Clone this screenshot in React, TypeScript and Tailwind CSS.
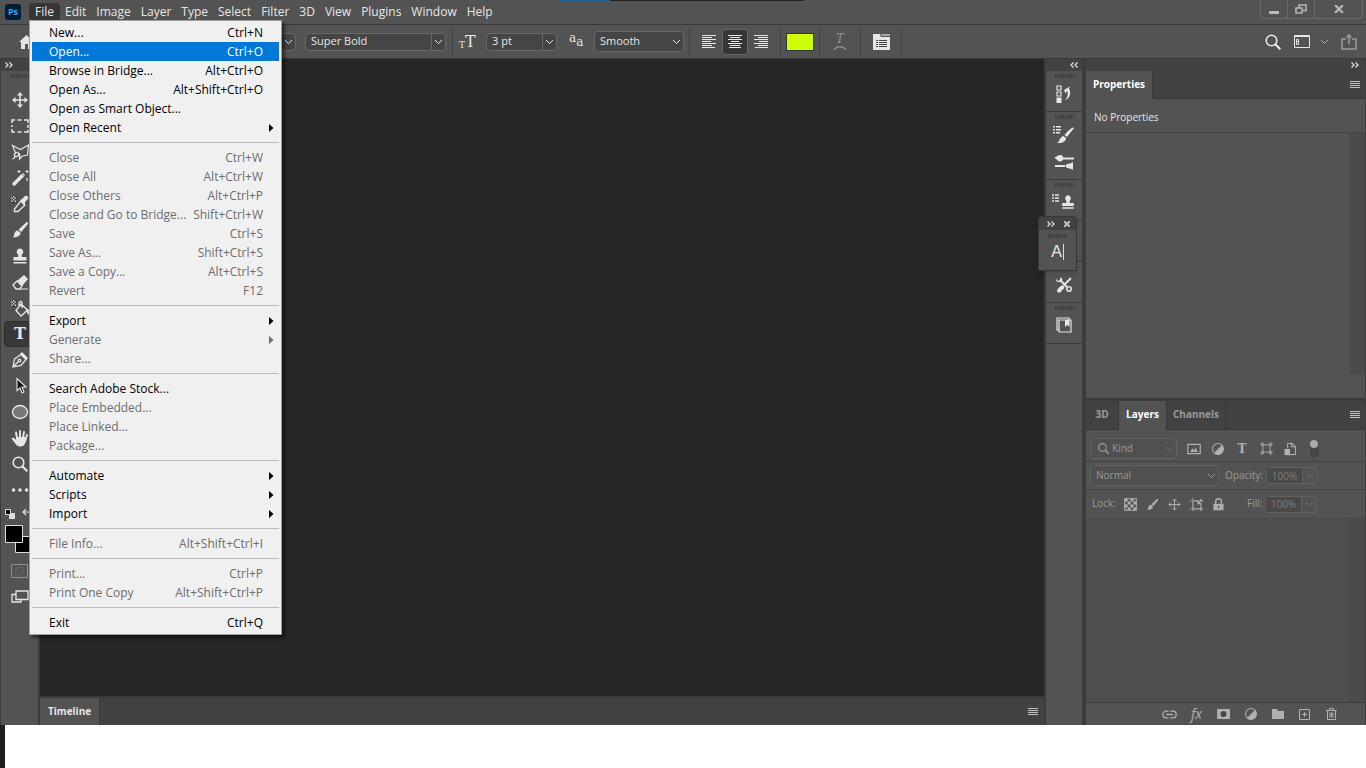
import { ReactNode } from "react";

interface MenuEntry {
    label: string;
    shortcut?: string;
    submenu?: boolean;
    disabled?: boolean;
    active?: boolean;
}

const menus = ["Edit", "Image", "Layer", "Type", "Select", "Filter", "3D", "View", "Plugins", "Window", "Help"];

const fileMenu: MenuEntry[][] = [
    [
        { label: "New...", shortcut: "Ctrl+N" },
        { label: "Open...", shortcut: "Ctrl+O", active: true },
        { label: "Browse in Bridge...", shortcut: "Alt+Ctrl+O" },
        { label: "Open As...", shortcut: "Alt+Shift+Ctrl+O" },
        { label: "Open as Smart Object..." },
        { label: "Open Recent", submenu: true },
    ],
    [
        { label: "Close", shortcut: "Ctrl+W", disabled: true },
        { label: "Close All", shortcut: "Alt+Ctrl+W", disabled: true },
        { label: "Close Others", shortcut: "Alt+Ctrl+P", disabled: true },
        { label: "Close and Go to Bridge...", shortcut: "Shift+Ctrl+W", disabled: true },
        { label: "Save", shortcut: "Ctrl+S", disabled: true },
        { label: "Save As...", shortcut: "Shift+Ctrl+S", disabled: true },
        { label: "Save a Copy...", shortcut: "Alt+Ctrl+S", disabled: true },
        { label: "Revert", shortcut: "F12", disabled: true },
    ],
    [
        { label: "Export", submenu: true },
        { label: "Generate", submenu: true, disabled: true },
        { label: "Share...", disabled: true },
    ],
    [
        { label: "Search Adobe Stock..." },
        { label: "Place Embedded...", disabled: true },
        { label: "Place Linked...", disabled: true },
        { label: "Package...", disabled: true },
    ],
    [
        { label: "Automate", submenu: true },
        { label: "Scripts", submenu: true },
        { label: "Import", submenu: true },
    ],
    [{ label: "File Info...", shortcut: "Alt+Shift+Ctrl+I", disabled: true }],
    [
        { label: "Print...", shortcut: "Ctrl+P", disabled: true },
        { label: "Print One Copy", shortcut: "Alt+Shift+Ctrl+P", disabled: true },
    ],
    [{ label: "Exit", shortcut: "Ctrl+Q" }],
];

// 18x18 icon drawn with strokes, children can override with their own fill
function Icon({ children, size = 18 }: { children: ReactNode; size?: number }) {
    return (
        <svg width={size} height={size} viewBox="0 0 18 18" fill="none" stroke="currentColor" strokeWidth="1.3" className="shrink-0">
            {children}
        </svg>
    );
}

const Move = () => (
    <Icon>
        <path d="M9 3v12M3 9h12" strokeWidth="1.5" />
        <path d="M9 1l3 3.5H6zM9 17l3-3.5H6zM1 9l3.5-3v6zM17 9l-3.500-3v6z" fill="currentColor" stroke="none" />
    </Icon>
);

const Brush = ({ size }: { size?: number }) => (
    <Icon size={size}>
        <path d="M16.600 1.200c.8.500.5 1.300-.1 2.200L10.200 11 7.500 8.700l7.300-7c.700-.6 1.200-.9 1.800-.5zM6.800 9.500l2.700 2.300c.2 2.500-2.500 5-8 4.400 1.800-1 1.500-2.400 2-4 .5-1.500 1.700-2.600 3.300-2.700z" fill="currentColor" stroke="none" />
    </Icon>
);

const Stamp = ({ size }: { size?: number }) => (
    <Icon size={size}>
        <path d="M9 1.500a3.300 3.300 0 0 1 2.300 5.600c-.6.800-.7 1.700-.4 2.900h4.600v3.500h-13V10h4.600c.3-1.200.2-2.100-.4-2.900A3.300 3.300 0 0 1 9 1.500zM2.500 15h13v1.500h-13z" fill="currentColor" stroke="none" />
    </Icon>
);

const Checker = () => (
    <g transform="translate(-1 0)">
        <path d="M.5 1h6l-.5 5.500-3 1.500-2.500-1.500z" fill="#1c1c1c" stroke="none" />
        <path d="M0 1h1.500v1.500H0zM3 1h1.500v1.500H3zM1.500 2.500H3V4H1.500zM4.500 2.500H6V4H4.500zM0 4h1.500v1.500H0zM3 4h1.500v1.500H3zM1.500 5.500H3V7H1.500zM4.500 5.500H6V7H4.500z" fill="currentColor" stroke="none" />
    </g>
);

const Magnifier = ({ size }: { size?: number }) => (
    <Icon size={size}>
        <circle cx="7.500" cy="7.500" r="5.300" strokeWidth="1.600" />
        <path d="M11.300 11.300l5 5" strokeWidth="2.200" />
    </Icon>
);

const Adjust = ({ size }: { size?: number }) => (
    <Icon size={size}>
        <circle cx="9" cy="9" r="7" />
        <path d="M4 14A7 7 0 0 0 14 4z" fill="currentColor" stroke="none" />
    </Icon>
);

const SlabT = ({ className }: { className: string }) => (
    <span className={`font-['DejaVu_Serif','Liberation_Serif',serif] leading-none ${className}`}>T</span>
);

const tools: { name: string; icon: ReactNode; selected?: boolean }[] = [
    { name: "Move", icon: <Move /> },
    { name: "Marquee", icon: <Icon><path d="M1 6V3h3M6.500 3h4M13 3h4v3M17 8v3M17 13v2h-4M10.500 15h-4M4 15H1v-3M1 10V8" strokeWidth="1.500" /></Icon> },
    {
        name: "Lasso",
        icon: <Icon><path d="M5 11L1.500 2.500l8 4 8-4.500-1 10-7 1.500M5.500 9.500c-2 0-3 2-1.500 3.500s4 0 3.500-2-1-2-2-1.500zM4 12.500c0 2-.5 3-2.500 3.500M8.500 10v6l2-2" strokeWidth="1.200" /></Icon>,
    },
    {
        name: "Magic Wand",
        icon: (
            <Icon>
                <path d="M10.500 5l2.500 2.500L4 16.500c-1.500 1-3.500-1-2.500-2.500z" fill="currentColor" stroke="none" />
                <path d="M11.500 4.500l2 2M8 1v3M6.500 2.500h3M16 1v3M14.500 2.500h3M16 9v3" strokeWidth="1.200" />
            </Icon>
        ),
    },
    {
        name: "Eyedropper",
        icon: (
            <Icon>
                <Checker />
                <path d="M10 6l4 4-7 6.500H3.500V14z" />
                <path d="M9 5l2-1 3-3c2-1 4 1 3 3l-3 3v2l-1.500 1z" fill="currentColor" stroke="none" />
            </Icon>
        ),
    },
    { name: "Brush Tool", icon: <Brush /> },
    { name: "Clone Stamp", icon: <Stamp /> },
    {
        name: "Eraser",
        icon: (
            <Icon>
                <path d="M2 12l4-4 5 5-2.500 3H5z" />
                <path d="M6.500 7.500L13 2l4 4-6 7zM8 15.500h9v1H8z" fill="currentColor" stroke="none" />
            </Icon>
        ),
    },
    {
        name: "Paint Bucket",
        icon: (
            <Icon>
                <Checker />
                <path d="M10 5l6.500 6-6.500 6-5-5.500zM8 8V4c0-2 3-2 3 0v5" />
                <path d="M15 9l3 2v5c-2-1-2-3-3-7z" fill="currentColor" stroke="none" />
            </Icon>
        ),
    },
    { name: "Type Tool", icon: <SlabT className="text-base font-bold" />, selected: true },
    {
        name: "Pen",
        icon: (
            <Icon>
                <path d="M2 16l1.500-8L10 3.500l5 5L10 14.500zM2 16l6-6" />
                <path d="M11 1l6 6-2 2-6-6z" fill="currentColor" stroke="none" />
                <circle cx="8.500" cy="9.500" r="1.300" />
            </Icon>
        ),
    },
    { name: "Path Selection", icon: <Icon><path d="M6 1.500v12l3-2.500 2 5 2-1-2-5h4z" fill="#111111" strokeWidth="1.100" /></Icon> },
    { name: "Ellipse", icon: <Icon><ellipse cx="9" cy="9" rx="7.500" ry="6.500" fill="#777777" /></Icon> },
    {
        name: "Hand",
        icon: <Icon><path d="M6 9L5 3.500M9 8V2M12 9l1-6M14 12l2-6" strokeWidth="1.900" strokeLinecap="round" /><path d="M5 8h9l1.500 2c-1 4-2 7.500-6 7.500-3 0-4-1-9-8 1-1.500 3-.5 4.500 1.500z" fill="currentColor" stroke="none" /></Icon>,
    },
    { name: "Zoom", icon: <Magnifier /> },
    { name: "More tools", icon: <Icon><path d="M2.500 9h.1M9 9h.1M15.500 9h.1" strokeWidth="3.500" strokeLinecap="round" /></Icon> },
];

function Chevron({ className = "" }: { className?: string }) {
    return (
        <svg width="9" height="6" viewBox="0 0 9 6" fill="none" stroke="currentColor" className={`pointer-events-none shrink-0 ${className}`}>
            <path d="M1 1l3.500 3.500L8 1" />
        </svg>
    );
}

function DoubleArrow({ left = false }: { left?: boolean }) {
    return (
        <svg width="8" height="6" viewBox="0 0 8 6" fill="none" stroke="currentColor" strokeWidth="1.300" className="text-[#dddddd]">
            <path d={left ? "M3.500.5L1 3l2.500 2.500M7.500.5L5 3l2.500 2.500" : "M.5.5L3 3 .5 5.500M4.500.5L7 3 4.500 5.500"} />
        </svg>
    );
}

function Grip() {
    return (
        <svg width="19" height="4" viewBox="0 0 19 4" stroke="#3c3c3c" className="shrink-0">
            <path d="M.5 0v4M2.500 0v4M4.500 0v4M6.500 0v4M8.500 0v4M10.500 0v4M12.500 0v4M14.500 0v4M16.500 0v4M18.500 0v4" />
        </svg>
    );
}

function Lines() {
    return (
        <button aria-label="Panel menu" className="text-[#c0c0c0]">
            <svg width="10" height="8" viewBox="0 0 10 8" stroke="currentColor">
                <path d="M0 .5h10M0 2.500h10M0 4.500h10M0 6.500h10" />
            </svg>
        </button>
    );
}

function Separator() {
    return <div className="h-7 w-px shrink-0 bg-[#424242]" />;
}

function Combo({ label, value, className, split = true }: { label: string; value: string; className: string; split?: boolean }) {
    return (
        <div className={`relative flex shrink-0 items-center rounded-sm border ${className}`}>
            <select aria-label={label} className="h-full w-full appearance-none bg-transparent pr-5 pl-[5px] outline-none">
                <option>{value}</option>
            </select>
            <div className={`pointer-events-none absolute inset-y-0 right-0 flex w-3.5 items-center justify-center ${split ? "border-l border-inherit" : ""}`}>
                <Chevron />
            </div>
        </div>
    );
}

function AlignIcon({ d }: { d: string }) {
    return (
        <svg width="14" height="13" viewBox="0 0 14 13" stroke="currentColor" strokeWidth="1">
            <path d={d} />
        </svg>
    );
}

function FileMenu() {
    return (
        <div role="menu" className="absolute top-5 left-[29px] z-20 w-[253px] border border-[#a0a0a0] bg-[#f0f0f0] p-0.5 text-black shadow-[3px_3px_3px_rgba(0,0,0,0.5)]">
            {fileMenu.map((group, i) => (
                <div key={i}>
                    {i > 0 && <hr className="my-[5px] border-[#bcbcbc]" />}
                    {group.map((item) => (
                        <button
                            key={item.label}
                            role="menuitem"
                            disabled={item.disabled}
                            className={`flex h-[19px] w-full items-center justify-between pr-[5px] pl-[17px] ${item.active ? "bg-[#0078d7] text-white" : item.disabled ? "text-[#6d6d6d]" : ""}`}
                        >
                            <span>{item.label}</span>
                            {item.shortcut && <span className="pr-[11px]">{item.shortcut}</span>}
                            {item.submenu && (
                                <svg width="5" height="8" viewBox="0 0 5 8" fill="currentColor">
                                    <path d="M0 0l4.500 4L0 8z" />
                                </svg>
                            )}
                        </button>
                    ))}
                </div>
            ))}
        </div>
    );
}

function MenuBar() {
    return (
        <header className="flex h-[25px] shrink-0 items-start justify-between border-b border-[#383838] pl-[5px]">
            <nav className="flex h-6 items-center">
                <div className="mr-2 flex size-4 items-center justify-center rounded-[3px] bg-[#001e36] text-[9px] font-bold text-[#31a8ff]">Ps</div>
                <button aria-haspopup="menu" className="h-[18px] rounded-sm bg-[#363636] px-1.5">File</button>
                <FileMenu />
                {menus.map((name) => (
                    <button key={name} className="px-[5px]">{name}</button>
                ))}
            </nav>
            <div className="mr-[3px] flex h-[19px] divide-x divide-[#6a6a6a] rounded-b-sm border border-t-0 border-[#6a6a6a] text-[#b8b8b8]">
                <button aria-label="Minimize" className="flex w-[27px] justify-center pt-[11px]">
                    <svg width="10" height="3" fill="currentColor"><rect width="10" height="3" /></svg>
                </button>
                <button aria-label="Restore" className="flex w-[27px] items-center justify-center">
                    <svg width="12" height="10" viewBox="0 0 12 10" fill="none" stroke="currentColor" strokeWidth="1.600">
                        <path d="M4 3.500V1h7v5.500H8M1 4h6v5H1z" />
                    </svg>
                </button>
                <button aria-label="Close window" className="flex w-[47px] items-center justify-center">
                    <svg width="10" height="8" viewBox="0 0 10 8" stroke="currentColor" strokeWidth="2.200"><path d="M1 0l8 8M9 0L1 8" /></svg>
                </button>
            </div>
        </header>
    );
}

function OptionsBar() {
    const box = "border-[#676767] bg-[#454545]";
    return (
        <div className="flex h-[34px] shrink-0 items-center border-b border-[#383838] pr-[9px] text-[11px]">
            <div className="flex w-[296px] shrink-0 items-center justify-between pl-[19px]">
                <button aria-label="Home">
                    <svg width="15" height="14" viewBox="0 0 15 14" fill="currentColor"><path d="M7.500 0L0 7h2v7h4V9h3v5h4V7h2z" /></svg>
                </button>
                <Combo label="Font family" value="" className={`h-[18px] w-44 ${box}`} />
            </div>
            <Combo label="Font style" value="Super Bold" className={`ml-[9px] h-[18px] w-[141px] ${box}`} />
            <div className="ml-1.5 flex items-center gap-1.5">
                <Separator />
                <div className="flex w-[19px] items-end"><SlabT className="text-[9px]" /><SlabT className="text-base" /></div>
            </div>
            <Combo label="Font size" value="3 pt" className={`ml-2 h-[18px] w-[71px] ${box}`} />
            <span className="ml-3 w-[25px] font-['DejaVu_Serif',serif] text-xs leading-none"><span className="relative -top-1">a</span>a</span>
            <Combo label="Anti-aliasing" value="Smooth" split={false} className={`h-[21px] w-[90px] ${box}`} />
            <div className="ml-[5px] flex items-center">
                <Separator />
                <div className="mx-1.5 flex items-center">
                    <button aria-label="Align left" className="flex h-[26px] w-[26px] items-center justify-center">
                        <AlignIcon d="M0 .5h14M0 2.500h10M0 4.500h14M0 6.500h9M0 8.500h14M0 10.500h10M0 12.500h13" />
                    </button>
                    <button aria-label="Align center" className="flex h-[26px] w-[26px] items-center justify-center rounded-sm border border-[#676767] bg-[#363636]">
                        <AlignIcon d="M0 .5h14M2 2.500h10M0 4.500h14M3 6.500h8M0 8.500h14M2 10.500h10M1 12.500h12" />
                    </button>
                    <button aria-label="Align right" className="flex h-[26px] w-[26px] items-center justify-center">
                        <AlignIcon d="M0 .5h14M4 2.500h10M0 4.500h14M5 6.500h9M0 8.500h14M4 10.500h10M1 12.500h13" />
                    </button>
                </div>
                <Separator />
                <button aria-label="Text color" className="mx-[5px] h-[18px] w-7 border border-[#363636] bg-[#ccff00]" />
                <Separator />
                <button aria-label="Warp text" className="flex w-10 flex-col items-center text-[#909090]">
                    <SlabT className="text-xs italic" />
                    <svg width="14" height="5" viewBox="0 0 14 5" fill="none" stroke="currentColor" strokeWidth="1.400"><path d="M1 4.500c4-4 8-4 12 0" /></svg>
                </button>
                <Separator />
                <button aria-label="Character panel" className="flex w-10 justify-center">
                    <svg width="17" height="16" viewBox="0 0 17 16" fill="currentColor">
                        <path d="M0 0h7l1 3h9v13H0z" /><path d="M8 0h9v2H9z" opacity=".6" />
                        <path d="M3 6.500h2M6 6.500h8M3 8.500h2M6 8.500h8M3 10.500h2M6 10.500h8M3 12.500h2M6 12.500h8" stroke="#444444" />
                    </svg>
                </button>
                <Separator />
            </div>
            <div className="ml-auto flex items-center">
                <button aria-label="Search" className="mr-3"><Magnifier /></button>
                <button aria-label="Workspace" className="mr-2.5">
                    <svg width="16" height="13" viewBox="0 0 16 13" fill="none" stroke="currentColor"><path d="M.5.5h15v12H.5zM0 1.500h16" /><path d="M2.500 4.500h2v2h-2zM2.500 6.500h2v3h-2z" /></svg>
                </button>
                <Chevron className="mr-3 text-[#b0b0b0]" />
                <button aria-label="Share" className="text-[#9a9a9a]">
                    <svg width="16" height="16" viewBox="0 0 16 16" fill="none" stroke="currentColor" strokeWidth="1.600"><path d="M5 5H1v10h14V5h-4M8 10V1M5.500 3.500L8 1l2.500 2.500" /></svg>
                </button>
            </div>
        </div>
    );
}

function Toolbar() {
    return (
        <aside className="flex w-10 shrink-0 flex-col border-r-2 border-l border-[#3c3c3c]">
            <div className="flex h-3 shrink-0 items-center bg-[#424242] pl-1"><DoubleArrow /></div>
            <div className="flex h-4 shrink-0 items-start pt-[3px] pl-[9px]"><Grip /></div>
            <div className="flex flex-col pl-[3px]">
                {tools.map((tool) => (
                    <button key={tool.name} aria-label={tool.name} className={`flex h-[26px] w-8 items-center justify-center rounded-sm ${tool.selected ? "border border-[#2e2e2e] bg-[#383838]" : ""}`}>
                        {tool.icon}
                    </button>
                ))}
            </div>
            <div className="mt-1.5 flex gap-1.5 pl-1">
                <button aria-label="Default colors">
                    <svg width="11" height="11" viewBox="0 0 11 11"><path d="M4 4h6v6H4z" fill="#dddddd" /><path d="M.5.5h5v5h-5z" fill="#000000" stroke="#dddddd" /></svg>
                </button>
                <button aria-label="Swap colors">
                    <svg width="11" height="11" viewBox="0 0 11 11" fill="none" stroke="currentColor" strokeWidth="1.200"><path d="M4 0L1 3l3 3M1 3h5c2 0 3 1 3 3v3" /></svg>
                </button>
            </div>
            <svg width="30" height="28" viewBox="0 0 30 28" className="mt-[5px] ml-1 shrink-0" stroke="#dddddd" fill="#000000">
                <path d="M10.500 11.500h18v16h-18z" /><path d="M.5.500h17v17H.5z" />
            </svg>
            <button aria-label="Quick mask" className="mt-[11px] ml-2.5 text-[#909090]">
                <svg width="17" height="14" viewBox="0 0 17 14" fill="none" stroke="currentColor"><path d="M.5.5h16v13H.5z" /><circle cx="8.500" cy="7" r="4" strokeDasharray="1 1.500" /></svg>
            </button>
            <button aria-label="Screen mode" className="mt-3 ml-2.5">
                <svg width="18" height="14" viewBox="0 0 18 14" fill="#535353" stroke="currentColor" strokeWidth="1.300"><path d="M1 4.500h9v7.500H1z" /><path d="M5 1h12v8.500H5z" /></svg>
            </button>
        </aside>
    );
}

function DockCell({ label, children }: { label: string; children: ReactNode }) {
    return (
        <button aria-label={label} className="flex min-h-[41px] w-full flex-col items-center gap-[7px] border-b border-[#3a3a3a] pt-[3px] pb-1.5">
            <Grip />
            {children}
        </button>
    );
}

function Dock() {
    return (
        <aside className="relative flex w-10 shrink-0 flex-col border-x-2 border-[#3c3c3c]">
            <div className="flex h-3 shrink-0 items-center justify-end bg-[#424242] pr-1"><DoubleArrow left /></div>
            <DockCell label="History">
                <svg width="16" height="18" viewBox="0 0 16 18" fill="none" stroke="currentColor" strokeWidth="1.200">
                    <path d="M1 1h4v4H1zM1 7h4v4H1z" /><path d="M.5 12.500h5V18h-5z" fill="currentColor" stroke="none" />
                    <path d="M8 5l6-3.500-1 2.200c2.500 5 1 9.500-4 11.300 3-3 3.500-6 2-9.500l-1.500 3z" fill="currentColor" stroke="none" />
                </svg>
            </DockCell>
            <DockCell label="Brushes">
                <svg width="22" height="18" viewBox="0 0 22 18" fill="currentColor">
                    <path d="M0 0h2v1.500H0zM3 0h5v1.500H3zM0 3h2v1.500H0zM3 3h5v1.500H3zM0 6h2v1.500H0zM3 6h4v1.500H3zM21 2l-7 9-2.500-2C15 5 20 0 21 2zM10.500 10l2.500 2c0 3-3 5.500-9 5 3-1 2-6 6.500-7z" />
                </svg>
                <svg width="20" height="18" viewBox="0 0 20 18" fill="currentColor" className="mt-0.5 mb-0.5">
                    <path d="M9 4.500h11v2H9zM0 4.500C3 4 4 1.500 7 2c3 .500 3 6 0 6.500C4 9 3 6 0 4.500zM1 12h10v2H1zM19 9v8c-1-1-4-2-6-2-2-1-2-3 0-4 2 0 4-1 6-2z" />
                </svg>
            </DockCell>
            <DockCell label="Clone source">
                <div className="flex items-start">
                    <svg width="8" height="8" viewBox="0 0 8 8" stroke="currentColor" strokeWidth="1.300"><path d="M0 1h2M3 1h4M0 4h2M3 4h4M0 7h2M3 7h4" /></svg>
                    <Stamp size={16} />
                </div>
            </DockCell>
            <DockCell label="Character"><span /></DockCell>
            <DockCell label="Tool presets">
                <Icon>
                    <path d="M16 2L8.500 9.500M6 5l6 6" strokeWidth="1.800" />
                    <path d="M1 3l2 2 2-1V1.500C8 2 8 5 6 6L3 6C1 5.500 1 4 1 3zM7.500 9l2 2c0 2-2 2-3 4-1 2-4 2-4.500 0C2 13 4 12 4.500 11z" fill="currentColor" stroke="none" />
                    <circle cx="14" cy="13" r="2.200" strokeWidth="1.600" />
                </Icon>
            </DockCell>
            <DockCell label="Libraries">
                <svg width="17" height="17" viewBox="0 0 17 17" fill="none" stroke="currentColor" strokeWidth="1.200"><path d="M3 3h12v12H3zM3 13H1V1h12v2" /><path d="M9 3v7l2.500-2 2 2V3z" fill="currentColor" stroke="none" /></svg>
            </DockCell>
            <div className="absolute top-[157px] -left-2 w-[39px] overflow-hidden rounded-t-sm border border-[#373737] bg-[#535353] shadow-md">
                <div className="flex h-[13px] items-center justify-between bg-[#424242] pr-1.5 pl-2">
                    <DoubleArrow />
                    <button aria-label="Close panel" className="text-[#c0c0c0]">
                        <svg width="6" height="6" viewBox="0 0 6 6" stroke="currentColor" strokeWidth="2"><path d="M0 0l6 6M6 0L0 6" /></svg>
                    </button>
                </div>
                <div className="flex h-10 flex-col items-center pt-1">
                    <Grip />
                    <span className="mt-1 flex items-center font-['Liberation_Sans',sans-serif] text-base leading-5">A<span className="ml-px h-4 w-px bg-[#dddddd]" /></span>
                </div>
            </div>
        </aside>
    );
}

function PropertiesPanel() {
    return (
        <section className="flex h-[329px] shrink-0 flex-col border-b-2 border-[#3c3c3c]">
            <div className="flex h-7 shrink-0 items-center justify-between border-b border-[#383838] bg-[#424242] pr-[5px]">
                <button className="h-7 border-r border-[#383838] bg-[#535353] px-[7px] font-bold text-white">Properties</button>
                <Lines />
            </div>
            <p className="flex h-[34px] shrink-0 items-center border-b border-[#434343] px-2 pt-1">No Properties</p>
            <div className="flex flex-1 justify-end pb-6"><div className="w-4 bg-[#4b4b4b]" /></div>
        </section>
    );
}

function LayersPanel() {
    const field = "border-[#626262] bg-[#505050] text-[#9a9a9a]";
    const filterButton = "flex w-6 items-center justify-center";
    const footerButton = "flex w-[27px] items-center justify-center";
    return (
        <section className="flex min-h-0 flex-1 flex-col border-t border-[#3c3c3c] text-[#9a9a9a]">
            <div className="flex h-[29px] shrink-0 items-center justify-between border-b border-[#383838] bg-[#424242] pr-[5px] font-bold">
                <div className="flex h-[29px]">
                    <button className="w-[33px] border-r border-[#383838]">3D</button>
                    <button className="w-12 border-r border-[#383838] bg-[#535353] text-white">Layers</button>
                    <button className="w-[59px] border-r border-[#383838]">Channels</button>
                </div>
                <Lines />
            </div>
            <div className="flex h-8 shrink-0 items-center border-b border-[#434343] pt-1.5 pl-1">
                <div className={`flex h-[21px] w-[87px] items-center rounded-sm border pl-1.5 ${field}`}>
                    <Magnifier size={13} />
                    <select aria-label="Filter type" className="min-w-0 flex-1 appearance-none bg-transparent pl-0.5"><option>Kind</option></select>
                    <Chevron className="mr-0.5 text-[#707070]" />
                </div>
                <div className="ml-[5px] flex items-center text-[#b0b0b0]">
                    <button aria-label="Pixel layers" className={filterButton}>
                        <Icon size={14}><path d="M1 3h16v12H1z" strokeWidth="1.500" /><path d="M4 13l3-5 2 3 2-4 3 6z" fill="currentColor" stroke="none" /></Icon>
                    </button>
                    <button aria-label="Adjustment layers" className={filterButton}><Adjust size={14} /></button>
                    <button aria-label="Type layers" className={filterButton}><SlabT className="text-xs font-bold" /></button>
                    <button aria-label="Shape layers" className={filterButton}>
                        <Icon size={13}><path d="M4 4h10v10H4zM1.500 1.500h3v3h-3zM13.500 1.500h3v3h-3zM1.500 13.500h3v3h-3zM13.500 13.500h3v3h-3z" /></Icon>
                    </button>
                    <button aria-label="Smart objects" className={filterButton}>
                        <Icon size={14}><path d="M6 8V2h6l4 4v10H9M11 2v4h5" /><path d="M2 9h7v8H2z" fill="currentColor" stroke="none" /></Icon>
                    </button>
                    <button aria-label="Toggle filter" className={filterButton}>
                        <span className="flex h-[18px] w-[9px] justify-center rounded-full bg-[#464646]"><span className="size-2 rounded-full bg-[#aaaaaa]" /></span>
                    </button>
                </div>
            </div>
            <div className="flex h-7 shrink-0 items-center border-b border-[#434343] pl-1">
                <Combo label="Blend mode" value="Normal" split={false} className={`h-[21px] w-[129px] ${field}`} />
                <label htmlFor="opacity" className="w-[47px] pl-1.5">Opacity:</label>
                <Percent id="opacity" />
            </div>
            <div className="flex h-[29px] shrink-0 items-center border-b border-[#484848] pl-1.5">
                <span className="w-8">Lock:</span>
                <div className="flex gap-[9px] text-[#b0b0b0]">
                    <button aria-label="Lock transparency">
                        <Icon size={13}><path d="M1 1h16v16H1z" strokeWidth="1.500" /><path d="M1 1h4v4H1zM9 1h4v4H9zM5 5h4v4H5zM13 5h4v4h-4zM1 9h4v4H1zM9 9h4v4H9zM5 13h4v4H5zM13 13h4v4h-4z" fill="currentColor" stroke="none" /></Icon>
                    </button>
                    <button aria-label="Lock pixels"><Brush size={13} /></button>
                    <button aria-label="Lock position"><svg width="13" height="13" viewBox="0 0 13 13" fill="none" stroke="currentColor"><path d="M6.500 1v11M1 6.500h11M4.500 3l2-2 2 2M4.500 10l2 2 2-2M3 4.500l-2 2 2 2M10 4.500l2 2-2 2" /></svg></button>
                    <button aria-label="Lock artboard"><Icon size={13}><path d="M4 4h7l4 4v7H4zM11 4v4h4M4 0v2M0 4h2M4 16v2M0 15h2M15 16v2M16 15h2M15 1v3M13 4h5" strokeWidth="1.500" /></Icon></button>
                    <button aria-label="Lock all"><Icon size={13}><path d="M5 8V5a4 4 0 0 1 8 0v3" strokeWidth="2" /><path d="M2 8h14v9H2z" fill="currentColor" stroke="none" /><path d="M9 11v3" stroke="#535353" strokeWidth="2" /></Icon></button>
                </div>
                <label htmlFor="fill" className="ml-auto w-[18px]">Fill:</label>
                <div className="mr-12"><Percent id="fill" /></div>
            </div>
            <div className="flex flex-1 justify-end bg-[#4f4f4f]"><div className="w-4 bg-[#4b4b4b]" /></div>
            <footer className="flex h-[23px] shrink-0 items-center justify-end border-t border-[#3c3c3c] bg-[#535353] pr-5 text-[#b0b0b0]">
                <button aria-label="Link layers" className={footerButton}><Icon size={15}><path d="M8 5H5a4 4 0 0 0 0 8h3M10 5h3a4 4 0 0 1 0 8h-3M5 9h8" strokeWidth="1.600" /></Icon></button>
                <button className={`${footerButton} text-sm leading-none italic`}>fx</button>
                <button aria-label="Add mask" className={footerButton}><svg width="13" height="10" viewBox="0 0 13 10" fill="currentColor"><path d="M0 0h13v10H0z" /><circle cx="6.500" cy="5" r="3" fill="#454545" /></svg></button>
                <button aria-label="New adjustment" className={footerButton}><Adjust size={14} /></button>
                <button aria-label="New group" className={footerButton}><svg width="12" height="10" viewBox="0 0 12 10" fill="currentColor"><path d="M0 0h5l1 2h6v8H0z" /></svg></button>
                <button aria-label="New layer" className={footerButton}><svg width="11" height="11" viewBox="0 0 11 11" fill="none" stroke="currentColor"><path d="M.5.5h10v10H.5zM5.500 3v5M3 5.500h5" /></svg></button>
                <button aria-label="Delete layer" className={footerButton}><svg width="11" height="12" viewBox="0 0 11 12" fill="none" stroke="currentColor"><path d="M0 2.500h11M3.500 2V.5h4V2M1.500 2.500v9h8v-9M4 4.500v5M5.500 4.500v5M7 4.500v5" /></svg></button>
            </footer>
        </section>
    );
}

function Percent({ id }: { id: string }) {
    return (
        <div className="flex h-[17px] w-[52px] items-center rounded-sm border border-[#626262] text-[#7c7c7c]">
            <input id={id} defaultValue="100%" className="h-full w-9 min-w-0 border-r border-[#626262] bg-[#494949] text-center outline-none" />
            <Chevron className="ml-[3px] text-[#707070]" />
        </div>
    );
}

function App() {
    return (
        <div className="relative flex h-screen flex-col bg-white font-['Open_Sans',sans-serif] text-xs text-[#e6e6e6]">
            <div className="absolute top-0 left-[41%] flex h-px w-[244px] bg-[#242424]"><div className="w-[50px] bg-[#286292]" /></div>
            <div className="flex min-h-0 flex-1 flex-col bg-[#535353]">
                <MenuBar />
                <OptionsBar />
                <div className="flex min-h-0 flex-1 text-[10px]">
                    <Toolbar />
                    <main className="flex min-w-0 flex-1 flex-col">
                        <div className="flex-1 bg-[#262626]" />
                        <div className="flex h-[29px] items-center justify-between border-t-2 border-[#3a3a3a] bg-[#424242] pr-1.5">
                            <button className="h-full border-r border-[#383838] bg-[#535353] px-2 font-bold">Timeline</button>
                            <Lines />
                        </div>
                    </main>
                    <Dock />
                    <div className="flex w-[282px] shrink-0 flex-col border-r border-l-2 border-[#3c3c3c]">
                        <div className="flex h-3 shrink-0 items-center justify-end bg-[#424242] pr-1.5"><DoubleArrow /></div>
                        <PropertiesPanel />
                        <LayersPanel />
                    </div>
                </div>
            </div>
            <div className="h-[43px] shrink-0 border-l-[5px] border-[#1e1e1e] bg-white" />
        </div>
    );
}

export default App;
